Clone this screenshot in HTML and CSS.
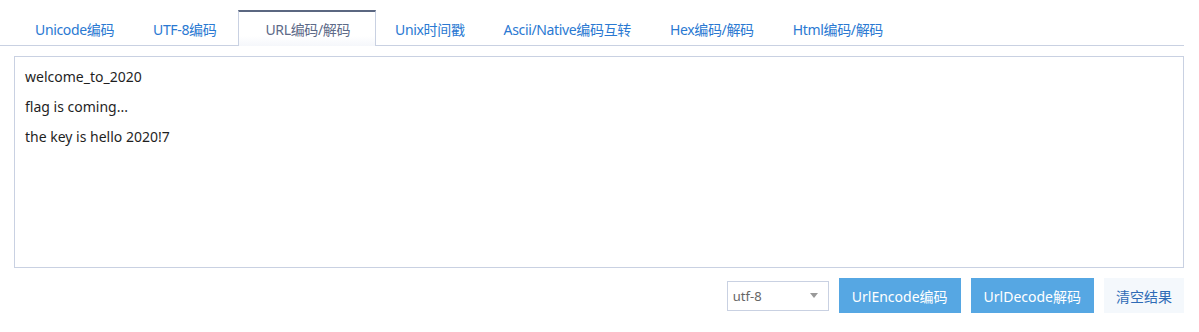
FILE: index.html
```html
<!DOCTYPE html>
<html lang="zh-CN">
<head>
<meta charset="utf-8">
<title>URL编码/解码</title>
<link rel="stylesheet" href="styles.css">
</head>
<body>
<div class="page">
  <nav class="tabs">
    <a class="tab">Unicode编码</a>
    <a class="tab">UTF-8编码</a>
    <a class="tab active">URL编码/解码</a>
    <a class="tab">Unix时间戳</a>
    <a class="tab">Ascii/Native编码互转</a>
    <a class="tab">Hex编码/解码</a>
    <a class="tab">Html编码/解码</a>
  </nav>
  <div class="editor">
    <div class="line">welcome_to_2020</div>
    <div class="line">flag is coming...</div>
    <div class="line">the key is hello 2020!7</div>
  </div>
  <div class="actions">
    <div class="select"><span class="select-value">utf-8</span><span class="caret"></span></div>
    <button class="btn btn-primary">UrlEncode编码</button>
    <button class="btn btn-primary">UrlDecode解码</button>
    <button class="btn btn-light">清空结果</button>
  </div>
</div>
</body>
</html>
```

FILE: styles.css
```css
html, body {
  margin: 0;
  padding: 0;
  background: #ffffff;
}
body {
  font-family: "Noto Sans", "Noto Sans CJK SC", sans-serif;
  font-size: 14px;
  color: #222222;
}
.page {
  padding: 0 15px 0 0;
}
.tabs {
  display: flex;
  padding: 10px 0 0 16px;
  border-bottom: 1px solid #c9d1e2;
  height: 35px;
}
.tab {
  display: flex;
  align-items: center;
  box-sizing: border-box;
  height: 36px;
  margin-bottom: -1px;
  padding: 0 19px 0 18px;
  border: 1px solid transparent;
  border-top: 2px solid transparent;
  border-bottom: 0;
  color: #2a79d2;
  font-size: 14px;
  letter-spacing: -0.35px;
  white-space: nowrap;
}
.tab.active {
  margin-left: 2px;
  padding: 0 25px 0 26px;
  border-color: #c9d1e2;
  border-top-color: #5b6781;
  background: linear-gradient(#ffffff 70%, #f5f7fb);
  color: #5d6a88;
}
.editor {
  margin: 10px 0 0 14px;
  height: 200px;
  border: 1px solid #c9d1e2;
  padding: 5px 10px;
}
.line {
  line-height: 30px;
  color: #1f1f1f;
}
.actions {
  display: flex;
  justify-content: flex-end;
  align-items: center;
  gap: 10px;
  margin-top: 10px;
}
.select {
  box-sizing: border-box;
  width: 102px;
  height: 30px;
  border: 1px solid #c9d1e2;
  display: flex;
  align-items: center;
  justify-content: space-between;
  padding: 0 10px 0 5px;
  font-size: 13px;
  color: #666666;
}
.caret {
  width: 0;
  height: 0;
  border-left: 4px solid transparent;
  border-right: 4px solid transparent;
  border-top: 5px solid #999999;
}
.btn {
  height: 35px;
  border: 0;
  padding: 0 13px;
  font-family: inherit;
  font-size: 14px;
}
.btn-primary {
  background: #56a7e3;
  color: #ffffff;
}
.btn-light {
  background: #f4f8fc;
  color: #2e6bb6;
  padding: 0 12px;
}
```
